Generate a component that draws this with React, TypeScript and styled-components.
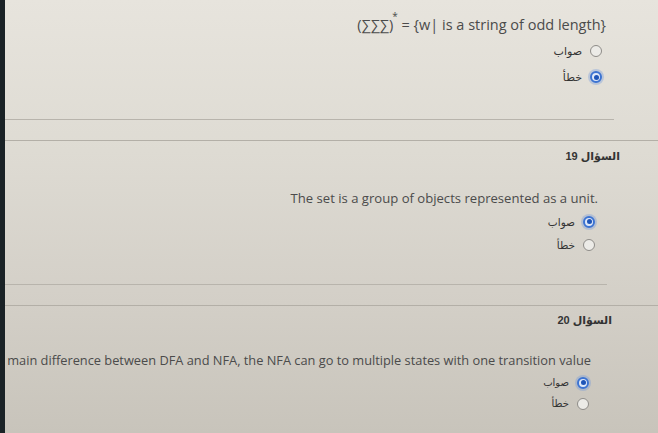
import React from 'react';
import styled, { createGlobalStyle } from 'styled-components';

const GlobalStyle = createGlobalStyle`
  html, body { margin: 0; padding: 0; }
  body {
    width: 658px;
    height: 433px;
    overflow: hidden;
    font-family: "Open Sans", "Liberation Sans", sans-serif;
  }
`;

const Page = styled.div`
  display: flex;
  width: 658px;
  height: 433px;
  overflow: hidden;
`;

const Bezel = styled.div`
  width: 5px;
  flex-shrink: 0;
  background: #1a2226;
`;

const Main = styled.div`
  flex: 1;
  direction: rtl;
  background: linear-gradient(180deg, #e7e4dd 0%, #dedbd3 35%, #d3cfc7 70%, #c8c4bb 100%);
`;

const Card = styled.div<{ $top?: boolean; $pt: number }>`
  border-top: ${p => (p.$top ? '1px solid #b3afa7' : 'none')};
  padding-top: ${p => p.$pt}px;
  padding-bottom: 20px;
`;

const Content = styled.div<{ $inset: number; $pb: number }>`
  margin-right: ${p => p.$inset}px;
  padding-bottom: ${p => p.$pb}px;
  border-bottom: 1px solid #b8b4ac;
`;

const LastContent = styled.div``;

const Header = styled.div<{ $mr: number }>`
  margin-right: ${p => p.$mr}px;
  font-family: "Liberation Sans", "DejaVu Sans", sans-serif;
  font-weight: 700;
  font-size: 11px;
  line-height: 16px;
  color: #333;
`;

const QText = styled.div<{ $pr: number; $size: number; $mt: number }>`
  padding-right: ${p => p.$pr}px;
  margin-top: ${p => p.$mt}px;
  font-size: ${p => p.$size}px;
  line-height: 18px;
  color: #4b4b4b;
  white-space: nowrap;

  span.ltr {
    direction: ltr;
    unicode-bidi: isolate;
    display: inline-block;
  }
`;

const Star = styled.span`
  display: inline-block;
  font-size: 10px;
  line-height: 10px;
  vertical-align: top;
  margin-top: -5px;
  margin-left: -1px;
`;

const Options = styled.div<{ $pr: number; $mt: number }>`
  padding-right: ${p => p.$pr}px;
  margin-top: ${p => p.$mt}px;
  display: flex;
  flex-direction: column;
`;

const Option = styled.div<{ $h: number }>`
  height: ${p => p.$h}px;
  display: flex;
  align-items: center;
  gap: 8px;
`;

const Radio = styled.span<{ $checked?: boolean }>`
  width: 12px;
  height: 12px;
  box-sizing: border-box;
  border-radius: 50%;
  flex-shrink: 0;
  position: relative;
  border: ${p => (p.$checked ? '2px solid #3d74d2' : '1px solid #8e8c88')};
  background: ${p => (p.$checked ? '#dfe8f8' : '#ecebe7')};
  box-shadow: ${p => (p.$checked ? '0 0 0 2px rgba(110, 150, 220, 0.35)' : 'none')};

  &::after {
    content: '';
    display: ${p => (p.$checked ? 'block' : 'none')};
    position: absolute;
    left: 50%;
    top: 50%;
    width: 5px;
    height: 5px;
    margin: -2.5px 0 0 -2.5px;
    border-radius: 50%;
    background: #1f55b8;
  }
`;

const Label = styled.span<{ $size: number }>`
  font-family: "DejaVu Sans", sans-serif;
  font-size: ${p => p.$size}px;
  color: #333;
`;

type Opt = { label: string; checked?: boolean };

const OptionList = ({ opts, pr, mt, h, size }: { opts: Opt[]; pr: number; mt: number; h: number; size: number }) => (
  <Options $pr={pr} $mt={mt}>
    {opts.map(o => (
      <Option key={o.label} $h={h}>
        <Radio $checked={o.checked} />
        <Label $size={size}>{o.label}</Label>
      </Option>
    ))}
  </Options>
);

export default function App() {
  return (
    <>
      <GlobalStyle />
      <Page>
        <Bezel />
        <Main>
          <Card $pt={16}>
            <Content $inset={44} $pb={29}>
              <QText $pr={8} $size={14.5} $mt={0}>
                <span className="ltr">
                  (∑∑∑)<Star>*</Star> = {'{'}w| is a string of odd length{'}'}
                </span>
              </QText>
              <OptionList
                pr={12}
                mt={4}
                h={26}
                size={11}
                opts={[{ label: 'صواب' }, { label: 'خطأ', checked: true }]}
              />
            </Content>
          </Card>

          <Card $top $pt={7}>
            <Content $inset={51} $pb={28}>
              <Header $mr={-13}>السؤال 19</Header>
              <QText $pr={9} $size={13.1} $mt={25}>
                <span className="ltr">The set is a group of objects represented as a unit.</span>
              </QText>
              <OptionList
                pr={12}
                mt={3}
                h={23}
                size={10.5}
                opts={[{ label: 'صواب', checked: true }, { label: 'خطأ' }]}
              />
            </Content>
          </Card>

          <Card $top $pt={6}>
            <LastContent>
              <Header $mr={46}>السؤال 20</Header>
              <QText $pr={67} $size={12.8} $mt={23}>
                <span className="ltr">
                  main difference between DFA and NFA, the NFA can go to multiple states with one transition value
                </span>
              </QText>
              <OptionList
                pr={69}
                mt={3}
                h={21}
                size={10}
                opts={[{ label: 'صواب', checked: true }, { label: 'خطأ' }]}
              />
            </LastContent>
          </Card>
        </Main>
      </Page>
    </>
  );
}
